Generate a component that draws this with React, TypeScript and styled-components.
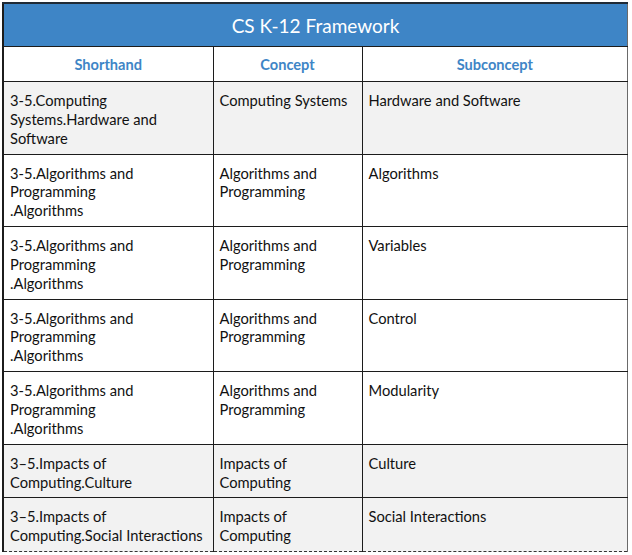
import styled, { createGlobalStyle } from "styled-components";

type Row = {
  shorthand: string[];
  concept: string[];
  subconcept: string;
  shaded: boolean;
};

const rows: Row[] = [
  {
    shorthand: ["3-5.Computing", "Systems.Hardware and", "Software"],
    concept: ["Computing Systems"],
    subconcept: "Hardware and Software",
    shaded: true,
  },
  {
    shorthand: ["3-5.Algorithms and", "Programming", ".Algorithms"],
    concept: ["Algorithms and", "Programming"],
    subconcept: "Algorithms",
    shaded: false,
  },
  {
    shorthand: ["3-5.Algorithms and", "Programming", ".Algorithms"],
    concept: ["Algorithms and", "Programming"],
    subconcept: "Variables",
    shaded: false,
  },
  {
    shorthand: ["3-5.Algorithms and", "Programming", ".Algorithms"],
    concept: ["Algorithms and", "Programming"],
    subconcept: "Control",
    shaded: false,
  },
  {
    shorthand: ["3-5.Algorithms and", "Programming", ".Algorithms"],
    concept: ["Algorithms and", "Programming"],
    subconcept: "Modularity",
    shaded: false,
  },
  {
    shorthand: ["3–5.Impacts of", "Computing.Culture"],
    concept: ["Impacts of", "Computing"],
    subconcept: "Culture",
    shaded: true,
  },
  {
    shorthand: ["3–5.Impacts of", "Computing.Social Interactions"],
    concept: ["Impacts of", "Computing"],
    subconcept: "Social Interactions",
    shaded: true,
  },
];

const Lines = ({ lines }: { lines: string[] }) => (
  <>
    {lines.map((l, i) => (
      <Line key={i}>{l}</Line>
    ))}
  </>
);

const App = () => {
  return (
    <>
      <GlobalStyle />
      <Page>
        <Table>
          <colgroup>
            <col style={{ width: 210 }} />
            <col style={{ width: 149 }} />
            <col />
          </colgroup>
          <thead>
            <tr>
              <TitleCell colSpan={3}>CS K-12 Framework</TitleCell>
            </tr>
            <tr>
              <HeaderCell>Shorthand</HeaderCell>
              <HeaderCell>Concept</HeaderCell>
              <HeaderCell>Subconcept</HeaderCell>
            </tr>
          </thead>
          <tbody>
            {rows.map((row, i) => (
              <BodyRow key={i} $shaded={row.shaded} $last={i === rows.length - 1}>
                <BodyCell>
                  <Lines lines={row.shorthand} />
                </BodyCell>
                <BodyCell>
                  <Lines lines={row.concept} />
                </BodyCell>
                <BodyCell>
                  <Line>{row.subconcept}</Line>
                </BodyCell>
              </BodyRow>
            ))}
          </tbody>
        </Table>
      </Page>
    </>
  );
};

const GlobalStyle = createGlobalStyle`
  body {
    margin: 0;
    background: #ffffff;
    font-family: "Lato", "Open Sans", sans-serif;
  }
`;

const Page = styled.div`
  padding: 2px 4px 0 2px;
`;

const Table = styled.table`
  width: 626px;
  border-collapse: collapse;
  table-layout: fixed;
  border-left: 2px solid #1c1c1c;
  border-right: 1px solid #6a6a6a;
`;

const TitleCell = styled.th`
  height: 42px;
  padding: 0;
  background: #3e85c6;
  color: #ffffff;
  font-size: 19px;
  font-weight: 400;
  text-align: center;
  border-top: 2px solid #1f2a36;
  border-bottom: 1px solid #1c1c1c;
`;

const HeaderCell = styled.th`
  height: 34px;
  padding: 0 7px;
  background: #ffffff;
  color: #3e85c6;
  font-size: 14.6px;
  font-weight: 700;
  text-align: center;
  border: 1px solid #1c1c1c;
  border-top: none;
  &:first-child {
    border-left: none;
  }
  &:last-child {
    border-right: none;
  }
`;

const BodyRow = styled.tr<{ $shaded: boolean; $last: boolean }>`
  background: ${(p) => (p.$shaded ? "#f2f2f2" : "#ffffff")};
  & > td {
    border-bottom: ${(p) => (p.$last ? "1px dashed #333333" : "1px solid #1c1c1c")};
  }
`;

const BodyCell = styled.td`
  vertical-align: top;
  padding: 9px 6px 6px 6px;
  border-right: 1px solid #1c1c1c;
  color: #111111;
  font-size: 14.7px;
  &:last-child {
    border-right: none;
  }
`;

const Line = styled.div`
  line-height: 18.85px;
  white-space: nowrap;
`;

export default App;
